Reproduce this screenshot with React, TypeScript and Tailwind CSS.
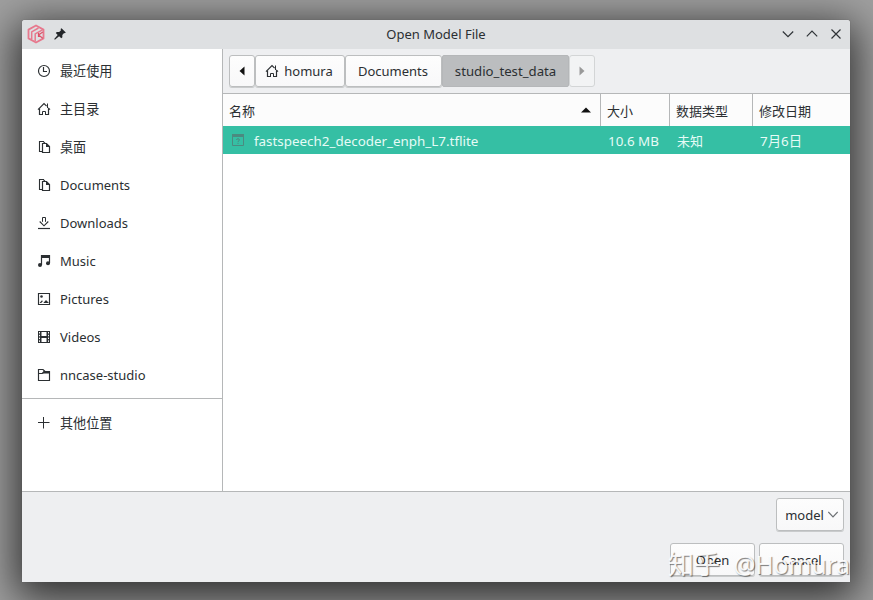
import React from "react";

type IconProps = { children: React.ReactNode; className?: string };

function Icon({ children, className = "" }: IconProps) {
  return (
    <svg width="16" height="16" viewBox="0 0 16 16" fill="none" stroke="currentColor" className={`shrink-0 ${className}`}>
      {children}
    </svg>
  );
}

const ClockIcon = () => (
  <Icon>
    <circle cx="8" cy="8" r="5.5" strokeWidth="1.15" />
    <path d="M7.5 4v4.5H11" strokeWidth="1.15" />
  </Icon>
);

const HomeIcon = () => (
  <Icon>
    <path d="M2 8.6 8 2.6l2.6 2.6M14 8.6l-1.8-1.8" strokeWidth="1.2" />
    <path d="M11.5 2.5V7" />
    <path d="M3.5 7.5v6h3M12.5 7.5v6h-3" strokeWidth="1.2" />
    <path d="M6.5 14v-3.5h3V14" />
  </Icon>
);

const CopyIcon = () => (
  <Icon>
    <path d="M6.5 12.5h-3v-10H8" strokeWidth="1.1" />
    <path d="M6.5 4.5h4l3 3v6h-7z" strokeWidth="1.2" />
    <path d="M10 4v4h4z" fill="currentColor" stroke="none" />
    <path d="M7.5 2v2.5H10z" fill="currentColor" stroke="none" />
  </Icon>
);

const DownloadIcon = () => (
  <Icon>
    <path d="M2 13.5h12" strokeWidth="1.2" />
    <path d="M6.5 6.8V2.5h3v4.3" />
    <path d="M3.7 6.5 8 10.8l4.3-4.3" strokeWidth="1.1" />
  </Icon>
);

const MusicIcon = () => (
  <Icon>
    <path d="M5.5 12V2.5h8V10M5.5 4.5h8" strokeWidth="1.2" />
    <path d="M5 3h9" strokeWidth="2" />
    <circle cx="4" cy="12" r="2" fill="currentColor" stroke="none" />
    <circle cx="12" cy="10.3" r="2" fill="currentColor" stroke="none" />
  </Icon>
);

const PictureIcon = () => (
  <Icon>
    <path d="M2.5 2.5h11v11h-11z" strokeWidth="1.15" />
    <circle cx="5.5" cy="5.5" r="1.3" fill="currentColor" stroke="none" />
    <path d="M3.5 12 6 9.3l.8.9L5.2 12zM7.3 12l2.7-3 3 3z" fill="currentColor" stroke="none" />
  </Icon>
);

const VideoIcon = () => (
  <Icon>
    <path d="M2 2h12v12H2z" fill="currentColor" stroke="none" />
    <path d="M5.5 3h5v4h-5zM5.5 9h5v4h-5z" fill="#fff" stroke="none" />
    <path d="M3.5 3v10M12.5 3v10" stroke="#fff" strokeDasharray="1.5 1.3" />
  </Icon>
);

const FolderIcon = () => (
  <Icon>
    <path d="M2.5 13.5v-11H7l2 2h4.5v9z" strokeWidth="1.15" />
    <path d="M2.5 6.5h3.7l1.3-1h6" strokeWidth="1.2" />
    <path d="M6 6.5 7.5 4H14v2.5z" fill="currentColor" stroke="none" />
  </Icon>
);

const PlusIcon = () => (
  <Icon>
    <path d="M2 7.5h11.5M7.5 2v11.5" />
  </Icon>
);

const UnknownFileIcon = () => (
  <Icon className="text-[#4b8a80]">
    <path d="M2.5 2.5h11v11h-11z" />
    <path d="M2 3.5h12" strokeWidth="3" />
    <path d="M6.6 8q0-1.3 1.4-1.3T9.4 8q0 .7-1.4 1.5v.6M8 10.9v1" />
  </Icon>
);

const AppLogo = () => (
  <svg width="18" height="20" viewBox="0 0 18 20" fill="none" stroke="#e7788d" strokeWidth="1.8" strokeLinejoin="round">
    <path d="M9 1.5 16.5 5.6v8.8L9 18.5 1.5 14.4V5.6z" />
    <path d="M4.7 15V7.8L11.5 4M8.2 17V9.8L15.5 5.8" strokeWidth="1.5" />
    <path d="m15.8 8-4.3 3 4.3 3.2M11.5 9v4" stroke="#dc5268" strokeWidth="1.2" />
  </svg>
);

const PinIcon = () => (
  <svg width="12" height="12" viewBox="0 0 12 12" fill="#232629">
    <path d="M7.5.2 11.800 4.400l-1 .9-.7-.2-1.800 1.800.1 2.400-1.100 1L5.100 8.300.9 11.800.2 11.100 3.700 6.900 1.800 5l1-1.100 2.400.1L7 2.200 6.600 1.100z" />
  </svg>
);

const Chevron = ({ d }: { d: string }) => (
  <svg width="12" height="12" viewBox="0 0 12 12" fill="none" stroke="#2f3337" strokeWidth="1.2">
    <path d={d} />
  </svg>
);

const places = [
  { label: "最近使用", icon: <ClockIcon />, cjk: true },
  { label: "主目录", icon: <HomeIcon />, cjk: true },
  { label: "桌面", icon: <CopyIcon />, cjk: true },
  { label: "Documents", icon: <CopyIcon /> },
  { label: "Downloads", icon: <DownloadIcon /> },
  { label: "Music", icon: <MusicIcon /> },
  { label: "Pictures", icon: <PictureIcon /> },
  { label: "Videos", icon: <VideoIcon /> },
  { label: "nncase-studio", icon: <FolderIcon /> },
];

function Place({ label, icon, cjk }: { label: string; icon: React.ReactNode; cjk?: boolean }) {
  return (
    <div className="flex h-[38px] items-center gap-2 pl-[14px]">
      {icon}
      <span className={cjk ? "text-[13.1px]" : ""}>{label}</span>
    </div>
  );
}

const button =
  "flex items-center justify-center rounded-[3px] border border-[#bcbebf] bg-linear-to-b from-[#fdfdfd] to-[#f8f8f9] shadow-[0_1px_0_#c9cbcc]";

const columns = "grid grid-cols-[378px_69px_83px_1fr]";

export default function App() {
  return (
    <div className="h-[600px] w-[873px] overflow-hidden bg-[#a0a0a0] pt-5 pl-[22px] font-['Noto_Sans','Noto_Sans_CJK_SC',sans-serif] text-[13px] leading-[18px] whitespace-nowrap text-[#2b2f32]">
      <div className="relative flex h-[562px] w-[828px] flex-col rounded-t-[3px] bg-[#eeeff1] shadow-[0_0_1px_#555,0_10px_42px_6px_rgba(0,0,0,0.72)]">
        <header className="flex h-[29px] shrink-0 items-center rounded-t-[3px] bg-[#dee0e2] px-[5px] pb-px">
          <div className="flex w-[83px] items-center gap-[9px]">
            <AppLogo />
            <PinIcon />
          </div>
          <h1 className="flex-1 text-center">Open Model File</h1>
          <div className="flex w-[83px] items-center justify-end gap-3 pr-[3px]">
            <Chevron d="M.8 3.5 6 8.7l5.2-5.2" />
            <Chevron d="M.8 8.3 6 3.1l5.2 5.2" />
            <Chevron d="m1.5 1.5 9 9m0-9-9 9" />
          </div>
        </header>

        <main className="flex h-[443px] shrink-0 border-b border-[#b5b7b8]">
          <aside className="w-[201px] shrink-0 border-r border-[#b5b7b8] bg-white pt-[3px]">
            {places.map((p) => (
              <Place key={p.label} {...p} />
            ))}
            <div className="mt-1 border-t border-[#b5b7b8] pt-[5px]">
              <Place label="其他位置" icon={<PlusIcon />} cjk />
            </div>
          </aside>

          <section className="flex min-w-0 flex-1 flex-col">
            <nav className="flex h-[45px] shrink-0 items-start border-b border-[#b5b7b8] pt-[6px] pl-[6px]">
              <div className={`${button} h-8 w-[26px]`}>
                <svg width="6" height="10" viewBox="0 0 6 10" fill="#111">
                  <path d="M5.5.5v9L.5 5z" />
                </svg>
              </div>
              <div className={`${button} h-8 w-[90px] gap-1 pr-[3px]`}>
                <HomeIcon />
                homura
              </div>
              <div className={`${button} h-8 w-[97px] pr-px`}>Documents</div>
              <div className="flex h-8 w-[127px] items-center justify-center rounded-[2px] border border-[#b5b7b9] bg-[#bbbdbf]">
                <span className="text-[13.2px]">studio_test_data</span>
              </div>
              <div className="flex h-8 w-[26px] items-center justify-center rounded-[3px] border border-[#d3d5d6] bg-[#f2f3f4]">
                <svg width="6" height="10" viewBox="0 0 6 10" fill="#999">
                  <path d="M.5.5v9l5-4.5z" />
                </svg>
              </div>
            </nav>
            <div className={`${columns} h-8 shrink-0 bg-[#fcfcfc]`}>
              <div className="flex items-center justify-between border-r border-[#b5b7b8] pr-[9px] pl-[6px]">
                <span className="pt-px">名称</span>
                <svg width="10" height="6" viewBox="0 0 10 6" fill="#111">
                  <path d="M0 5.5 5 .5l5 5z" />
                </svg>
              </div>
              <div className="flex items-center border-r border-[#b5b7b8] pt-px pl-[6px]">大小</div>
              <div className="flex items-center border-r border-[#b5b7b8] pt-px pl-[6px]">数据类型</div>
              <div className="flex items-center pt-px pl-[6px]">修改日期</div>
            </div>
            <div className={`${columns} h-7 shrink-0 items-center bg-[#35bfa4] text-[#e6fbf6]`}>
              <div className="flex items-center gap-2 pl-[7px]">
                <UnknownFileIcon />
                <span className="pt-[2px] text-[13.4px]">fastspeech2_decoder_enph_L7.tflite</span>
              </div>
              <div className="pt-[2px] pl-[7px] text-[13.4px]">10.6 MB</div>
              <div className="pt-[2px] pl-[7px]">未知</div>
              <div className="pt-[2px] pl-[7px] text-[13.4px]">7月6日</div>
            </div>
            <div className="flex-1 bg-white" />
          </section>
        </main>

        <footer className="flex flex-1 flex-col items-end gap-3 pt-[6px] pr-[6px]">
          <div className={`${button} h-[33px] w-[68px] gap-1 pt-px pl-[3px]`}>
            model
            <svg width="10" height="7" viewBox="0 0 10 7" fill="none" stroke="#6c7073" strokeWidth="1.2" className="-mt-0.5">
              <path d="m.3 1 4.7 4.8L9.7 1" />
            </svg>
          </div>
          <div className="flex gap-1">
            <div className={`${button} h-[33px] w-[85px]`}>Open</div>
            <div className={`${button} h-[33px] w-[85px]`}>Cancel</div>
          </div>
        </footer>

        <div className="pointer-events-none absolute top-[527px] left-[646px] flex w-[182px] items-baseline justify-between text-[26px] leading-[34px] text-white/90 [text-shadow:1px_1px_1px_rgba(0,0,0,0.5)]">
          <span>知乎</span>
          <span className="text-[24.5px]">@Homura</span>
        </div>
      </div>
    </div>
  );
}
